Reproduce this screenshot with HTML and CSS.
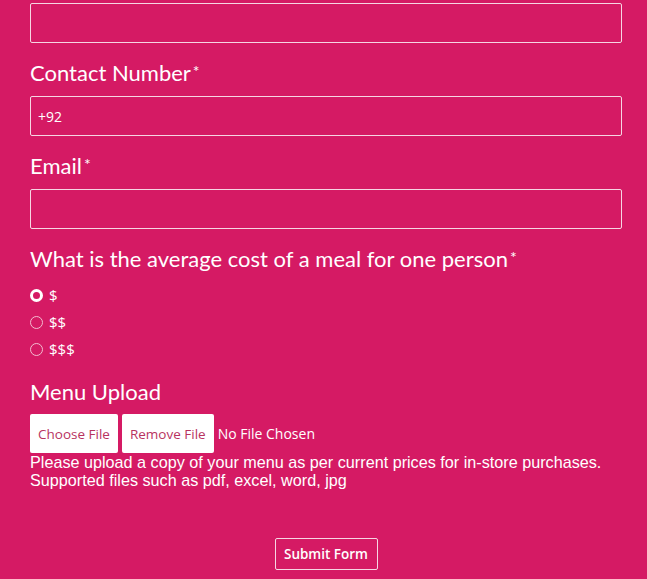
FILE: index.html
```html
<!DOCTYPE html>
<html lang="en">
<head>
<meta charset="utf-8">
<title>Form</title>
<link rel="stylesheet" href="styles.css">
</head>
<body>
<form class="form">
  <div class="field first">
    <input class="text-input" type="text">
  </div>
  <div class="field">
    <label class="label">Contact Number<span class="req">*</span></label>
    <input class="text-input" type="text" value="+92">
  </div>
  <div class="field">
    <label class="label">Email<span class="req">*</span></label>
    <input class="text-input" type="text">
  </div>
  <div class="field">
    <label class="label">What is the average cost of a meal for one person<span class="req">*</span></label>
    <div class="radios">
      <div class="radio-row"><span class="radio checked"></span><span class="radio-text">$</span></div>
      <div class="radio-row"><span class="radio"></span><span class="radio-text">$$</span></div>
      <div class="radio-row"><span class="radio"></span><span class="radio-text">$$$</span></div>
    </div>
  </div>
  <div class="field upload">
    <label class="label">Menu Upload</label>
    <div class="file-row">
      <button type="button" class="file-btn">Choose File</button>
      <button type="button" class="file-btn">Remove File</button>
      <span class="file-status">No File Chosen</span>
    </div>
    <div class="help">
      <span class="help-line">Please upload a copy of your menu as per current prices for in-store purchases.</span>
      <span class="help-line">Supported files such as pdf, excel, word, jpg</span>
    </div>
  </div>
  <div class="submit-row">
    <button type="button" class="submit">Submit Form</button>
  </div>
</form>
</body>
</html>
```
FILE: styles.css
```css
html, body {
  margin: 0;
  padding: 0;
  background: #d51a64;
  height: 100%;
  overflow: hidden;
}
.form {
  display: flex;
  flex-direction: column;
  padding: 3px 25px 0 30px;
  color: #fff;
  font-family: "Lato", "Noto Sans", sans-serif;
}
.field {
  display: flex;
  flex-direction: column;
}
.label {
  font-family: "Lato", "Noto Sans", sans-serif;
  font-size: 22px;
  line-height: 24px;
  height: 24px;
  margin-top: 18px;
  margin-bottom: 11px;
  color: #fff;
  white-space: nowrap;
}
.req {
  font-size: 16px;
  line-height: 0;
  margin-left: 2px;
  vertical-align: 4px;
}
.text-input {
  box-sizing: border-box;
  width: 592px;
  height: 40px;
  margin: 0;
  border: 1px solid #f6d6e3;
  border-radius: 2px;
  background: transparent;
  color: #fff;
  font-family: "Open Sans", sans-serif;
  font-weight: 500;
  font-size: 14px;
  padding: 0 7px;
  outline: none;
}
.radios {
  display: flex;
  flex-direction: column;
  gap: 9px;
  margin-top: 4px;
}
.radio-row {
  display: flex;
  align-items: center;
  gap: 6px;
  height: 18px;
}
.radio {
  box-sizing: border-box;
  width: 13px;
  height: 13px;
  border-radius: 50%;
  border: 1px solid #f2bcd0;
}
.radio.checked {
  border: 3.5px solid #fff;
}
.radio-text {
  font-family: "Open Sans", sans-serif;
  font-weight: 500;
  font-size: 15px;
  color: #fff;
}
.upload .label {
  margin-top: 22px;
  margin-bottom: 10px;
}
.file-row {
  display: flex;
  align-items: center;
  gap: 4px;
}
.file-btn {
  height: 39px;
  background: #fff;
  border: none;
  border-radius: 2px;
  color: #b8335f;
  font-family: "Open Sans", sans-serif;
  font-size: 13.5px;
  padding: 0 8px;
  margin: 0;
}
.file-status {
  font-family: "Open Sans", sans-serif;
  font-weight: 500;
  font-size: 14px;
  color: #fff;
}
.help {
  display: flex;
  flex-direction: column;
  margin-top: 0;
}
.help-line {
  display: block;
  font-family: "Liberation Sans", Arial, sans-serif;
  font-size: 16.2px;
  line-height: 18.2px;
  height: 18.2px;
  color: #fff;
  white-space: nowrap;
}
.submit-row {
  display: flex;
  justify-content: center;
  margin-top: 49px;
}
.submit {
  box-sizing: border-box;
  width: 103px;
  height: 32px;
  background: transparent;
  border: 1px solid #f6d6e3;
  border-radius: 2px;
  color: #fff;
  font-family: "Open Sans", sans-serif;
  font-weight: 600;
  font-size: 13.5px;
  padding: 0;
}
```
